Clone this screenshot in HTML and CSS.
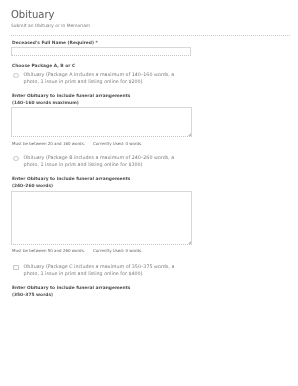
FILE: index.html
```html
<!DOCTYPE html>
<html>
<head>
<meta charset="utf-8">
<link rel="stylesheet" href="styles.css">
</head>
<body>
<div class="page">
  <h1 class="title">Obituary</h1>
  <p class="subtitle">Submit an Obituary or In Memoriam</p>
  <div class="sep"></div>

  <div class="label first">Deceased's Full Name (Required) *</div>
  <div class="input"></div>

  <div class="label choose">Choose Package A, B or C</div>
  <div class="option opt-a">
    <span class="radio"></span>
    <span class="opt-text">Obituary (Package A includes a maximum of 140–160 words, a photo, 1 issue in print and listing online for $200)</span>
  </div>

  <div class="label enter">Enter Obituary to include funeral arrangements<br>(140–160 words maximum)</div>
  <div class="textarea short"><span class="grip"></span></div>
  <div class="hint">Must be between 20 and 160 words.<span class="gap"></span>Currently Used: 0 words.</div>

  <div class="option opt-b">
    <span class="radio"></span>
    <span class="opt-text">Obituary (Package B includes a maximum of 240–260 words, a photo, 1 issue in print and listing online for $300)</span>
  </div>

  <div class="label enter">Enter Obituary to include funeral arrangements<br>(240–260 words)</div>
  <div class="textarea tall"><span class="grip"></span></div>
  <div class="hint hint-b">Must be between 50 and 260 words.<span class="gap"></span>Currently Used: 0 words.</div>

  <div class="option opt-c">
    <span class="radio square"></span>
    <span class="opt-text">Obituary (Package C includes a maximum of 350–375 words, a photo, 1 issue in print and listing online for $400)</span>
  </div>

  <div class="label enter">Enter Obituary to include funeral arrangements<br>(350–375 words)</div>
</div>
</body>
</html>
```

FILE: styles.css
```css
html, body {
  margin: 0;
  padding: 0;
  background: #ffffff;
}
body {
  font-family: "DejaVu Sans", Verdana, sans-serif;
  color: #6a6a6a;
}
.page {
  padding: 9px 8px 0 11px;
  will-change: transform;
  -webkit-font-smoothing: antialiased;
}
.title {
  margin: 0;
  font-size: 10px;
  line-height: 12px;
  font-weight: normal;
  color: #5a5a5a;
}
.subtitle {
  margin: 2px 0 0 0;
  font-size: 4.4px;
  line-height: 6px;
  color: #7a7a7a;
}
.sep {
  margin-top: 6px;
  border-top: 1px dotted #cccccc;
}
.label {
  font-size: 4.4px;
  line-height: 7px;
  font-weight: bold;
  color: #505050;
  padding-left: 1px;
}
.label.first { margin-top: 3px; }
.label.choose { margin-top: 6px; }
.label.enter { margin-top: 7px; }
.input {
  margin-top: 1px;
  width: 180px;
  height: 9px;
  box-sizing: border-box;
  border: 1px solid #d8d8d8;
  border-bottom: 1px dotted #c4c4c4;
  background: #fff;
}
.option {
  display: flex;
  align-items: flex-start;
  font-size: 4.8px;
  line-height: 7px;
  color: #7a7a7a;
  width: 175px;
}
.opt-a { margin-top: 2px; }
.opt-b { margin-top: 7px; }
.opt-c { margin-top: 9px; }
.radio {
  flex: none;
  width: 3.6px;
  height: 3.6px;
  margin: 1.6px 5px 0 2px;
  border: 0.5px solid #c8c8c8;
  border-radius: 50%;
  background: #fbfbfb;
}
.radio.square {
  border-radius: 0.8px;
}
.opt-text {
  flex: 1;
}
.textarea {
  position: relative;
  width: 181px;
  box-sizing: border-box;
  border: 1px solid #d8d8d8;
  border-bottom: 1px dotted #c4c4c4;
  background: #fff;
}
.textarea.short { margin-top: 1px; height: 30px; }
.textarea.tall { margin-top: 2px; height: 54px; }
.grip {
  position: absolute;
  right: 0;
  bottom: 0;
  width: 0;
  height: 0;
  border-left: 3px solid transparent;
  border-bottom: 3px solid #bcbcbc;
}
.hint {
  margin-top: 4px;
  font-size: 4px;
  line-height: 6px;
  color: #666666;
  padding-left: 1px;
}
.hint.hint-b { margin-top: 3px; }
.gap {
  display: inline-block;
  width: 8px;
}
```
